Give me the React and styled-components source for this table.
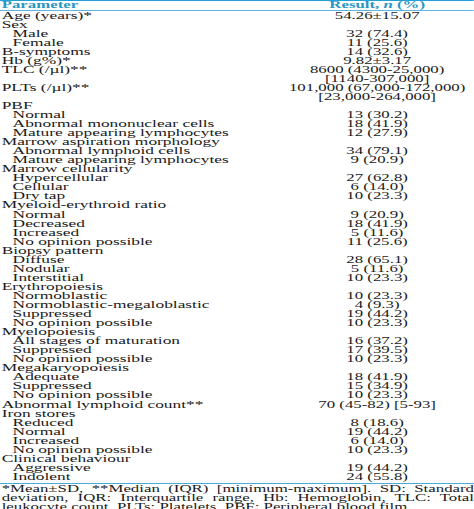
import React from 'react'
import styled, { createGlobalStyle } from 'styled-components'

// the source image is stretched sideways, so the sheet is laid out narrow and widened once
const STRETCH = 1.68

const GlobalStyle = createGlobalStyle`
  html, body {
    margin: 0;
    padding: 0;
    background: #ffffff;
  }
  body {
    overflow: hidden;
  }
`

const Sheet = styled.section`
  width: ${474 / STRETCH}px;
  transform: scaleX(${STRETCH});
  transform-origin: 0 0;
  font-family: "Liberation Serif", "Times New Roman", serif;
  font-size: 10px;
  color: #1a1a1a;
`

const Row = styled.div`
  display: grid;
  grid-template-columns: 167px 115px;
  line-height: 9.05px;
`

const HeadRow = styled(Row)`
  border-top: 1.5px solid #22a0d8;
  border-bottom: 1px solid #5cb6e2;
  line-height: 8.5px;
  font-weight: bold;
  color: #2897c2;
`

const Param = styled.div`
  padding-left: ${p => (p.$sub ? 7.5 : 1)}px;
  font-size: ${p => (p.$head ? 10 : 10.35)}px;
  white-space: nowrap;
`

const Value = styled.div`
  text-align: center;
  white-space: nowrap;
`

const Body = styled.div`
  display: flex;
  flex-direction: column;
  padding-bottom: 2.5px;
`

const Footer = styled.footer`
  border-top: 1.5px solid #46aadb;
  padding-top: 1px;
  padding-left: 1px;
  line-height: 8.6px;
`

const FootLine = styled.div`
  white-space: nowrap;
  text-align: ${p => (p.$justify ? 'justify' : 'left')};
  text-align-last: ${p => (p.$justify ? 'justify' : 'left')};
`

const rows = [
  { label: 'Age (years)*', value: '54.26±15.07' },
  { label: 'Sex' },
  { label: 'Male', value: '32 (74.4)', sub: true },
  { label: 'Female', value: '11 (25.6)', sub: true },
  { label: 'B-symptoms', value: '14 (32.6)' },
  { label: 'Hb (g%)*', value: '9.82±3.17' },
  { label: 'TLC (/µl)**', value: ['8600 (4300-25,000)', '[1140-307,000]'] },
  { label: 'PLTs (/µl)**', value: ['101,000 (67,000-172,000)', '[23,000-264,000]'] },
  { label: 'PBF' },
  { label: 'Normal', value: '13 (30.2)', sub: true },
  { label: 'Abnormal mononuclear cells', value: '18 (41.9)', sub: true },
  { label: 'Mature appearing lymphocytes', value: '12 (27.9)', sub: true },
  { label: 'Marrow aspiration morphology' },
  { label: 'Abnormal lymphoid cells', value: '34 (79.1)', sub: true },
  { label: 'Mature appearing lymphocytes', value: '9 (20.9)', sub: true },
  { label: 'Marrow cellularity' },
  { label: 'Hypercellular', value: '27 (62.8)', sub: true },
  { label: 'Cellular', value: '6 (14.0)', sub: true },
  { label: 'Dry tap', value: '10 (23.3)', sub: true },
  { label: 'Myeloid-erythroid ratio' },
  { label: 'Normal', value: '9 (20.9)', sub: true },
  { label: 'Decreased', value: '18 (41.9)', sub: true },
  { label: 'Increased', value: '5 (11.6)', sub: true },
  { label: 'No opinion possible', value: '11 (25.6)', sub: true },
  { label: 'Biopsy pattern' },
  { label: 'Diffuse', value: '28 (65.1)', sub: true },
  { label: 'Nodular', value: '5 (11.6)', sub: true },
  { label: 'Interstitial', value: '10 (23.3)', sub: true },
  { label: 'Erythropoiesis' },
  { label: 'Normoblastic', value: '10 (23.3)', sub: true },
  { label: 'Normoblastic-megaloblastic', value: '4 (9.3)', sub: true },
  { label: 'Suppressed', value: '19 (44.2)', sub: true },
  { label: 'No opinion possible', value: '10 (23.3)', sub: true },
  { label: 'Myelopoiesis' },
  { label: 'All stages of maturation', value: '16 (37.2)', sub: true },
  { label: 'Suppressed', value: '17 (39.5)', sub: true },
  { label: 'No opinion possible', value: '10 (23.3)', sub: true },
  { label: 'Megakaryopoiesis' },
  { label: 'Adequate', value: '18 (41.9)', sub: true },
  { label: 'Suppressed', value: '15 (34.9)', sub: true },
  { label: 'No opinion possible', value: '10 (23.3)', sub: true },
  { label: 'Abnormal lymphoid count**', value: '70 (45-82) [5-93]' },
  { label: 'Iron stores' },
  { label: 'Reduced', value: '8 (18.6)', sub: true },
  { label: 'Normal', value: '19 (44.2)', sub: true },
  { label: 'Increased', value: '6 (14.0)', sub: true },
  { label: 'No opinion possible', value: '10 (23.3)', sub: true },
  { label: 'Clinical behaviour' },
  { label: 'Aggressive', value: '19 (44.2)', sub: true },
  { label: 'Indolent', value: '24 (55.8)', sub: true },
]

const renderValue = value => {
  if (!value) return null
  if (Array.isArray(value)) return value.map(line => <div key={line}>{line}</div>)
  return value
}

const App = () => (
  <>
    <GlobalStyle />
    <Sheet>
      <HeadRow>
        <Param $head>Parameter</Param>
        <Value>Result, <i>n</i> (%)</Value>
      </HeadRow>
      <Body>
        {rows.map((row, i) => (
          <Row key={i}>
            <Param $sub={row.sub}>{row.label}</Param>
            <Value>{renderValue(row.value)}</Value>
          </Row>
        ))}
      </Body>
      <Footer>
        <FootLine $justify>*Mean±SD, **Median (IQR) [minimum-maximum]. SD: Standard</FootLine>
        <FootLine $justify>deviation, IQR: Interquartile range, Hb: Hemoglobin, TLC: Total</FootLine>
        <FootLine>leukocyte count, PLTs: Platelets, PBF: Peripheral blood film</FootLine>
      </Footer>
    </Sheet>
  </>
)

export default App
